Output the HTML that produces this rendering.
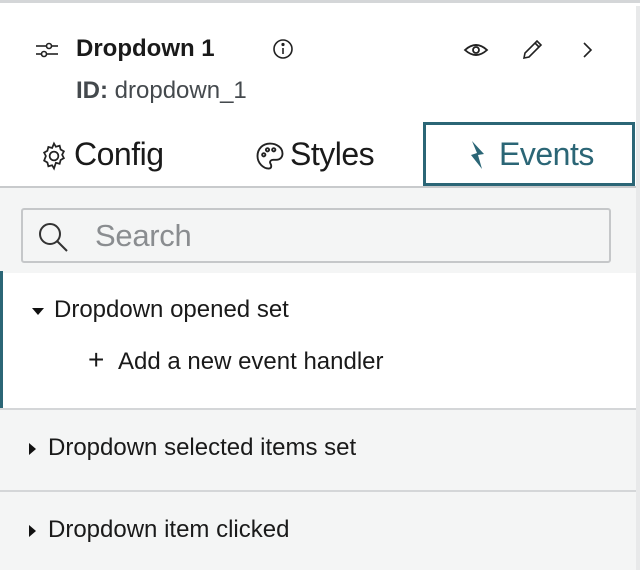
<!DOCTYPE html>
<html><head><style>
body{margin:0;width:640px;height:570px;overflow:hidden;background:#fff;font-family:"Liberation Sans",sans-serif;position:relative}
.a{position:absolute;white-space:nowrap}
</style></head><body>
<div class="a" style="left:0;top:0;width:640px;height:6px;background:#fff;border-top:3px solid #d4d6d8;box-sizing:border-box"></div>
<div class="a" style="left:636px;top:6px;width:4px;height:564px;background:#e8e9ea"></div>
<svg class="a" style="left:34px;top:40px" width="26" height="20" viewBox="0 0 26 20" fill="none" stroke="#222" stroke-width="1.6"><line x1="2" y1="6" x2="12" y2="6"/><circle cx="15" cy="6" r="2.5"/><line x1="18" y1="6" x2="24" y2="6"/><line x1="2" y1="14" x2="7" y2="14"/><circle cx="10" cy="14" r="2.5"/><line x1="13" y1="14" x2="24" y2="14"/></svg>
<div class="a" style="left:76px;top:35px;font-size:24px;font-weight:bold;color:#1a1a1a">Dropdown 1</div>
<svg class="a" style="left:272px;top:38px" width="22" height="22" viewBox="0 0 22 22" fill="none" stroke="#222" stroke-width="1.6"><circle cx="11" cy="11" r="9"/><line x1="11" y1="10" x2="11" y2="16"/><circle cx="11" cy="6.5" r="0.8" fill="#222"/></svg>
<svg class="a" style="left:463px;top:40px" width="26" height="20" viewBox="0 0 26 20" fill="none" stroke="#222" stroke-width="1.8"><path d="M2 10Q13 0 24 10Q13 20 2 10Z"/><circle cx="13" cy="10" r="3"/></svg>
<svg class="a" style="left:520px;top:38px" width="24" height="24" viewBox="0 0 24 24" fill="none" stroke="#222" stroke-width="1.6"><path d="M4 20L5 15L17 3L21 7L9 19Z"/><line x1="15" y1="5" x2="19" y2="9"/></svg>
<svg class="a" style="left:580px;top:40px" width="14" height="20" viewBox="0 0 14 20" fill="none" stroke="#222" stroke-width="1.6"><path d="M4 3L11 10L4 17"/></svg>
<div class="a" style="left:76px;top:77px;font-size:24px;color:#44494d"><b>ID:</b> dropdown_1</div>
<svg class="a" style="left:39px;top:141px" width="30" height="30" viewBox="0 0 24 24" fill="none" stroke="#222" stroke-width="1.4"><circle cx="12" cy="12" r="3.5"/><path d="M12 2l1.5 2.6 3-.8.8 3 2.6 1.5-1.4 2.7 1.4 2.7-2.6 1.5-.8 3-3-.8L12 22l-1.5-2.6-3 .8-.8-3-2.6-1.5L5.5 12 4.1 9.3 6.7 7.8l.8-3 3 .8z"/></svg>
<div class="a" style="left:74px;top:136px;font-size:32px;color:#1a1a1a;letter-spacing:-0.5px">Config</div>
<svg class="a" style="left:255px;top:141px" width="30" height="30" viewBox="0 0 24 24" fill="none" stroke="#222" stroke-width="1.5"><path d="M12 2C6 2 2 6.5 2 12s4.5 10 9 10c1.5 0 2-1 2-2 0-1.5-1-2-1-3s1-2 2.5-2H17c3 0 5-2 5-5 0-4.5-4.5-8-10-8z"/><circle cx="7" cy="11" r="1.3"/><circle cx="10" cy="7" r="1.3"/><circle cx="15" cy="7" r="1.3"/></svg>
<div class="a" style="left:290px;top:136px;font-size:32px;color:#1a1a1a;letter-spacing:-0.5px">Styles</div>
<div class="a" style="left:423px;top:122px;width:212px;height:64px;border:3px solid #2b6676;box-sizing:border-box"></div>
<svg class="a" style="left:467px;top:140px" width="22" height="30" viewBox="0 0 22 30"><path d="M5 1L17 14L11 15L15 29L4 15L10 13Z" fill="#2b6676"/></svg>
<div class="a" style="left:499px;top:136px;font-size:32px;color:#2b6676;letter-spacing:-0.5px">Events</div>
<div class="a" style="left:0;top:186px;width:636px;height:85px;background:#f4f5f5;border-top:2px solid #c8cacc"></div>
<div class="a" style="left:21px;top:208px;width:590px;height:55px;border:2px solid #c5c7c9;border-radius:3px;box-sizing:border-box;background:#f4f5f5"></div>
<svg class="a" style="left:37px;top:221px" width="32" height="32" viewBox="0 0 32 32" fill="none" stroke="#333" stroke-width="2"><circle cx="13" cy="13" r="10"/><line x1="20" y1="20" x2="30" y2="30"/></svg>
<div class="a" style="left:95px;top:218px;font-size:31px;color:#8a8d90;letter-spacing:-0.3px">Search</div>
<div class="a" style="left:0;top:271px;width:3px;height:137px;background:#2b6676"></div>
<svg class="a" style="left:31px;top:306px" width="14" height="10"><path d="M1 2L13 2L7 9Z" fill="#111"/></svg>
<div class="a" style="left:54px;top:296px;font-size:24px;color:#1a1a1a">Dropdown opened set</div>
<div class="a" style="left:88px;top:346px;font-size:28px;color:#1a1a1a;line-height:28px">+</div>
<div class="a" style="left:118px;top:348px;font-size:24px;color:#1a1a1a">Add a new event handler</div>
<div class="a" style="left:0;top:408px;width:636px;height:162px;background:#f4f5f5"></div>
<div class="a" style="left:0;top:408px;width:636px;height:2px;background:#d4d6d8"></div>
<div class="a" style="left:0;top:490px;width:636px;height:2px;background:#d4d6d8"></div>
<svg class="a" style="left:27px;top:442px" width="10" height="14"><path d="M2 1L9 7L2 13Z" fill="#111"/></svg>
<div class="a" style="left:48px;top:434px;font-size:24px;color:#1a1a1a">Dropdown selected items set</div>
<svg class="a" style="left:27px;top:524px" width="10" height="14"><path d="M2 1L9 7L2 13Z" fill="#111"/></svg>
<div class="a" style="left:48px;top:516px;font-size:24px;color:#1a1a1a">Dropdown item clicked</div>
</body></html>
